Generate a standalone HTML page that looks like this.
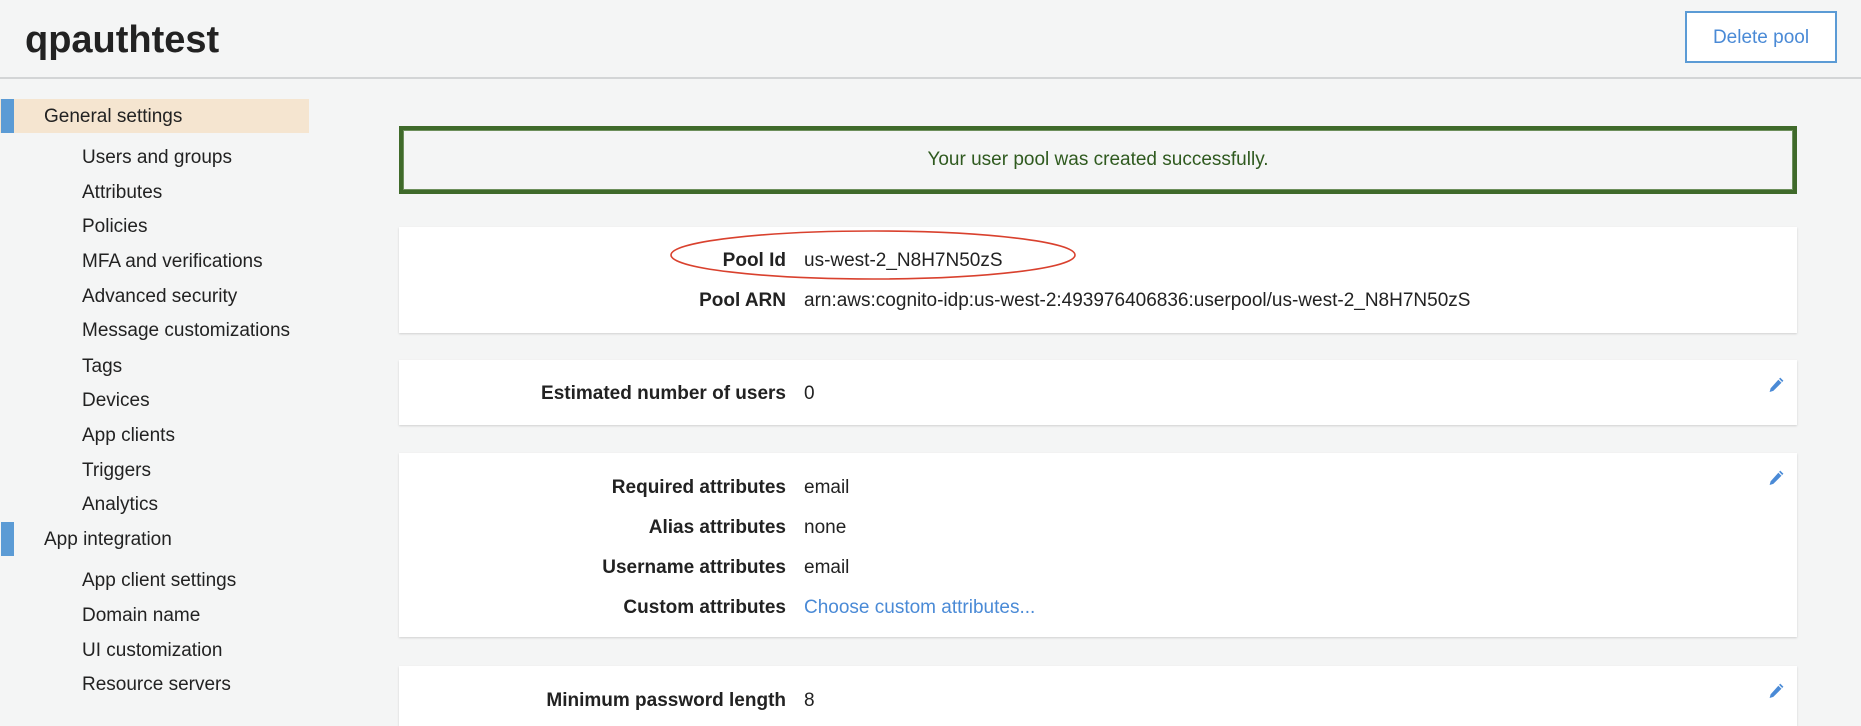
<!DOCTYPE html>
<html><head><meta charset="utf-8"><style>
*{margin:0;padding:0;box-sizing:border-box}
body{width:1861px;height:700px;overflow:hidden;background:#f4f5f5;font-family:"Liberation Sans",Arial,sans-serif;color:#222;position:relative}
.a{position:absolute;white-space:nowrap}
.hdr{left:0;top:0;width:1861px;height:79px;border-bottom:2px solid #d3d5d6;background:#f4f5f5}
.title{left:25px;top:19px;font-size:38px;font-weight:bold;color:#222}
.btn{left:1685px;top:11px;width:152px;height:52px;border:2px solid #5b9bd5;background:#fff;color:#4a8ad6;font-size:19px;text-align:center;line-height:50px}
.nav{font-size:19px;line-height:22px;transform:translateY(-10px)}
.sub{left:82px}
.sec{left:44px}
.card{background:#fff;left:399px;width:1398px;box-shadow:0 1px 2px rgba(0,0,0,.15)}
.lab{right:1075px;font-weight:bold;font-size:19px;transform:translateY(-10px);line-height:22px}
.val{left:804px;font-size:19px;transform:translateY(-10px);line-height:22px}
.pen{left:1768px}
</style></head><body>
<div class="a hdr"></div>
<div class="a title">qpauthtest</div>
<div class="a btn">Delete pool</div>

<div class="a" style="left:0;top:99px;width:309px;height:34px;background:#f5e5d0"></div>
<div class="a" style="left:1px;top:99px;width:13px;height:34px;background:#5b9bd5"></div>
<div class="a nav sec" style="top:116px">General settings</div>
<div class="a nav sub" style="top:157px">Users and groups</div>
<div class="a nav sub" style="top:192px">Attributes</div>
<div class="a nav sub" style="top:226px">Policies</div>
<div class="a nav sub" style="top:261px">MFA and verifications</div>
<div class="a nav sub" style="top:296px">Advanced security</div>
<div class="a nav sub" style="top:330px">Message customizations</div>
<div class="a nav sub" style="top:366px">Tags</div>
<div class="a nav sub" style="top:400px">Devices</div>
<div class="a nav sub" style="top:435px">App clients</div>
<div class="a nav sub" style="top:470px">Triggers</div>
<div class="a nav sub" style="top:504px">Analytics</div>
<div class="a" style="left:1px;top:522px;width:13px;height:34px;background:#5b9bd5"></div>
<div class="a nav sec" style="top:539px">App integration</div>
<div class="a nav sub" style="top:580px">App client settings</div>
<div class="a nav sub" style="top:615px">Domain name</div>
<div class="a nav sub" style="top:650px">UI customization</div>
<div class="a nav sub" style="top:684px">Resource servers</div>

<div class="a" style="left:399px;top:126px;width:1398px;height:68px;border:4px solid #3f6a2a;box-shadow:inset 0 0 0 1px #6d8f5c;color:#2f5a1f;font-size:19px;text-align:center;line-height:60px">Your user pool was created successfully.</div>

<div class="a card" style="top:227px;height:106px"></div>
<div class="a lab" style="top:260px">Pool Id</div>
<div class="a val" style="top:260px">us-west-2_N8H7N50zS</div>
<div class="a lab" style="top:300px">Pool ARN</div>
<div class="a val" style="top:300px">arn:aws:cognito-idp:us-west-2:493976406836:userpool/us-west-2_N8H7N50zS</div>
<svg class="a" style="left:0;top:0" width="1861" height="700"><ellipse cx="873" cy="255" rx="202" ry="24" fill="none" stroke="#d9412e" stroke-width="1.6"/></svg>

<div class="a card" style="top:360px;height:65px"></div>
<div class="a lab" style="top:393px">Estimated number of users</div>
<div class="a val" style="top:393px">0</div>

<div class="a card" style="top:453px;height:184px"></div>
<div class="a lab" style="top:487px">Required attributes</div>
<div class="a val" style="top:487px">email</div>
<div class="a lab" style="top:527px">Alias attributes</div>
<div class="a val" style="top:527px">none</div>
<div class="a lab" style="top:567px">Username attributes</div>
<div class="a val" style="top:567px">email</div>
<div class="a lab" style="top:607px">Custom attributes</div>
<div class="a val" style="top:607px;color:#4a8ad6">Choose custom attributes...</div>

<div class="a card" style="top:666px;height:60px"></div>
<div class="a lab" style="top:700px">Minimum password length</div>
<div class="a val" style="top:700px">8</div>

<svg class="a pen" style="top:376px" width="17" height="17" viewBox="0 0 16 16"><path d="M11.5 1.5l3 3L5 14 1.5 15 2.5 11.5z" fill="#4a8ad6"/><path d="M10 3l3 3" stroke="#fff" stroke-width="1"/></svg>
<svg class="a pen" style="top:469px" width="17" height="17" viewBox="0 0 16 16"><path d="M11.5 1.5l3 3L5 14 1.5 15 2.5 11.5z" fill="#4a8ad6"/><path d="M10 3l3 3" stroke="#fff" stroke-width="1"/></svg>
<svg class="a pen" style="top:682px" width="17" height="17" viewBox="0 0 16 16"><path d="M11.5 1.5l3 3L5 14 1.5 15 2.5 11.5z" fill="#4a8ad6"/><path d="M10 3l3 3" stroke="#fff" stroke-width="1"/></svg>
</body></html>
